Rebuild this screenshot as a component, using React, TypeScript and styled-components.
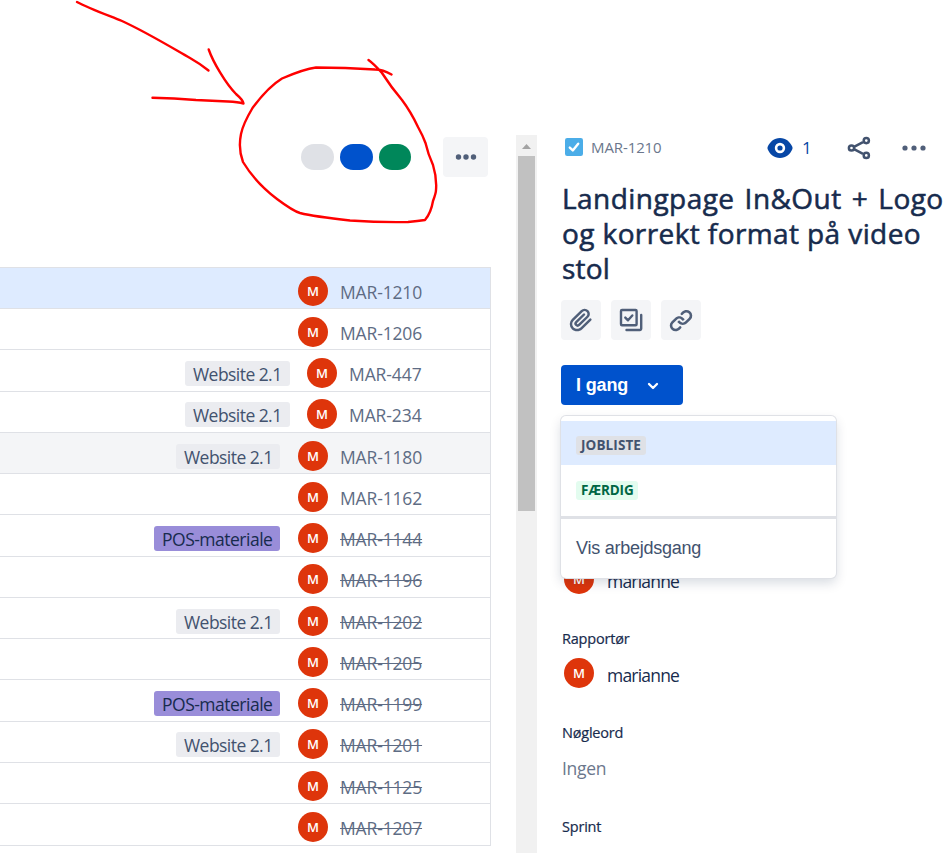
import React from "react";
import styled, { createGlobalStyle, css } from "styled-components";

const GlobalStyle = createGlobalStyle`
  * { box-sizing: border-box; }
  body {
    margin: 0;
    background: #fff;
    color: #172b4d;
    font-family: "Open Sans", "Noto Sans", sans-serif;
  }
`;

const Page = styled.main`
  position: relative;
  display: grid;
  grid-template-columns: 491px 21px 391px;
  column-gap: 25px;
  width: 952px;
  height: 853px;
  overflow: hidden;
`;

const Backlog = styled.section`
  display: flex;
  flex-direction: column;
  padding-top: 137px;
`;

const Toolbar = styled.div`
  display: flex;
  align-items: center;
  justify-content: flex-end;
  gap: 6px;
  height: 40px;
  padding-right: 3px;
  margin-bottom: 90px;
`;

const Pill = styled.span<{ $color: string; $width?: number }>`
  width: ${(p) => p.$width ?? 33}px;
  height: 26px;
  border-radius: 13px;
  background: ${(p) => p.$color};
`;

const MoreButton = styled.button`
  display: flex;
  align-items: center;
  justify-content: center;
  width: 45px;
  height: 40px;
  margin-left: 26px;
  padding: 0;
  border: 0;
  border-radius: 4px;
  background: #f4f5f7;
`;

const IssueList = styled.div`
  border-right: 1px solid #dfe1e6;
  border-bottom: 1px solid #dfe1e6;
`;

const IssueRow = styled.div<{ $tone?: string; $tall: boolean; $raised: boolean }>`
  display: flex;
  align-items: flex-start;
  justify-content: flex-end;
  height: ${(p) => (p.$tall ? 42 : 41)}px;
  padding: ${(p) => (p.$raised ? 7 : 8)}px 68px 0 0;
  border-top: 1px solid #dfe1e6;
  background: ${(p) => p.$tone ?? "#fff"};
`;

const Tag = styled.span<{ $epic: boolean; $wide: boolean }>`
  height: 25px;
  margin: 3px ${(p) => (p.$wide ? 17 : 18)}px 0 0;
  padding: 0 8px;
  border-radius: 3px;
  font-size: 17.5px;
  line-height: 27px;
  white-space: nowrap;
  ${(p) =>
    p.$epic
      ? css`
          width: 126px;
          background: #998dd9;
          color: #172b4d;
          letter-spacing: -0.5px;
        `
      : css`
          width: ${p.$wide ? 105 : 104}px;
          background: #ebecf0;
          color: #42526e;
          letter-spacing: -0.55px;
        `}
`;

const Avatar = styled.span`
  display: flex;
  flex: none;
  align-items: center;
  justify-content: center;
  width: 30px;
  height: 30px;
  border-radius: 50%;
  background: #de350b;
  color: #fff;
  font-size: 13px;
  font-weight: 600;
  line-height: 30px;
`;

const IssueKey = styled.span<{ $done: boolean; $short: boolean }>`
  width: ${(p) => (p.$short ? 73 : 82)}px;
  margin-left: 12px;
  color: #5e6c84;
  font-size: 17.5px;
  line-height: 32px;
  letter-spacing: ${(p) => (p.$short ? -0.1 : -0.15)}px;
  white-space: nowrap;
  text-decoration: ${(p) => (p.$done ? "line-through" : "none")};
`;

const ScrollTrack = styled.div`
  display: flex;
  flex-direction: column;
  align-items: center;
  margin-top: 135px;
  background: #f1f1f1;
`;

const ScrollArrow = styled.svg`
  flex: none;
  width: 21px;
  height: 21px;
`;

const ScrollThumb = styled.div`
  width: 17px;
  height: 355px;
  background: #c1c1c1;
`;

const Detail = styled.section`
  display: flex;
  flex-direction: column;
  margin-left: -1px;
  padding-top: 133px;
`;

const DetailHeader = styled.header`
  display: flex;
  align-items: center;
  height: 30px;
  padding-left: 4px;
`;

const HeaderKey = styled.span`
  width: 176px;
  margin: -2px 0 0 8px;
  color: #6b778c;
  font-size: 15px;
  letter-spacing: -0.1px;
`;

const WatchCount = styled.span`
  width: 45px;
  margin-top: -2px;
  padding-left: 9px;
  color: #0747a6;
  font-size: 17px;
`;

const TypeIcon = styled.svg`
  flex: none;
  margin-top: -2px;
`;

const HeaderIcon = styled.svg<{ $gap?: number }>`
  flex: none;
  margin-left: ${(p) => p.$gap ?? 0}px;
`;

const Title = styled.h1`
  height: 105px;
  margin: 18px 0 14px 1px;
  font-size: 28px;
  font-weight: 400;
  line-height: 35px;
  white-space: nowrap;
  -webkit-text-stroke: 0.55px #172b4d;
`;

const TitleLine = styled.span<{ $tracking: number; $wordGap: number }>`
  display: block;
  letter-spacing: ${(p) => p.$tracking}px;
  word-spacing: ${(p) => p.$wordGap}px;
`;

const Actions = styled.div`
  display: flex;
  gap: 10px;
  height: 40px;
  margin-bottom: 25px;
`;

const ActionButton = styled.button`
  display: flex;
  align-items: center;
  justify-content: center;
  width: 40px;
  height: 40px;
  padding: 0;
  border: 0;
  border-radius: 4px;
  background: #f4f5f7;
  color: #505f79;
`;

const StatusArea = styled.div`
  position: relative;
  height: 40px;
  margin-bottom: 159px;
`;

const StatusButton = styled.button`
  display: flex;
  align-items: center;
  width: 122px;
  height: 40px;
  padding: 0 0 0 15px;
  border: 0;
  border-radius: 4px;
  background: #0052cc;
  color: #fff;
  font: bold 18px/40px "Liberation Sans", Arial, sans-serif;
`;

const StatusLabel = styled.span`
  width: 71px;
  text-align: left;
  letter-spacing: -0.15px;
`;

const StatusMenu = styled.div`
  position: absolute;
  z-index: 1;
  top: 51px;
  left: 0;
  width: 275px;
  height: 162px;
  padding-top: 5px;
  border-radius: 5px;
  background: #fff;
  box-shadow: 0 0 0 1px #dfe1e6, 0 5px 12px rgba(9, 30, 66, 0.16);
`;

const MenuItem = styled.div<{ $active?: boolean }>`
  display: flex;
  align-items: center;
  height: ${(p) => (p.$active ? 44 : 51)}px;
  padding: ${(p) => (p.$active ? "4px 15px 0" : "0 15px 1px")};
  background: ${(p) => (p.$active ? "#deebff" : "transparent")};
`;

const Lozenge = styled.span<{ $done?: boolean }>`
  width: ${(p) => (p.$done ? 62 : 70)}px;
  height: 19px;
  padding-left: 5px;
  border-radius: 3px;
  background: ${(p) => (p.$done ? "#e3fcef" : "#dfe1e6")};
  color: ${(p) => (p.$done ? "#006644" : "#42526e")};
  font-size: 13.5px;
  font-weight: 700;
  line-height: 19px;
  letter-spacing: ${(p) => (p.$done ? -0.15 : 0.1)}px;
  white-space: nowrap;
`;

const MenuFooter = styled.div`
  height: 62px;
  padding: 0 15px;
  border-top: 3px solid #dfe1e6;
  color: #42526e;
  font: 18px/58px "Liberation Sans", Arial, sans-serif;
  letter-spacing: -0.25px;
`;

const Field = styled.div`
  height: 94px;
`;

const PersonRow = styled.div`
  display: flex;
  align-items: center;
  height: 30px;
  padding-left: 3px;
`;

const PersonName = styled.span`
  margin-left: 13px;
  padding-top: 3px;
  font-size: 17.5px;
  line-height: 26px;
  letter-spacing: -0.8px;
`;

const Assignee = styled(PersonRow)`
  margin-bottom: 34px;
`;

const FieldLabel = styled.div`
  height: 30px;
  padding-left: 1px;
  font-size: 14.5px;
  line-height: 22px;
  letter-spacing: -0.2px;
  -webkit-text-stroke: 0.2px #172b4d;
`;

const EmptyValue = styled.div`
  padding-left: 1px;
  color: #6b778c;
  font-size: 17.5px;
  line-height: 33px;
  letter-spacing: -0.3px;
`;

const Annotation = styled.svg`
  position: absolute;
  z-index: 2;
  top: 0;
  left: 0;
  pointer-events: none;
`;

type Issue = { key: string; tag?: string; done?: boolean; tone?: string };

const issues: Issue[] = [
  { key: "MAR-1210", tone: "#deebff" },
  { key: "MAR-1206" },
  { key: "MAR-447", tag: "Website 2.1" },
  { key: "MAR-234", tag: "Website 2.1" },
  { key: "MAR-1180", tag: "Website 2.1", tone: "#f4f5f7" },
  { key: "MAR-1162" },
  { key: "MAR-1144", tag: "POS-materiale", done: true },
  { key: "MAR-1196", done: true },
  { key: "MAR-1202", tag: "Website 2.1", done: true },
  { key: "MAR-1205", done: true },
  { key: "MAR-1199", tag: "POS-materiale", done: true },
  { key: "MAR-1201", tag: "Website 2.1", done: true },
  { key: "MAR-1125", done: true },
  { key: "MAR-1207", done: true },
];

const tallRows = [2, 6, 10, 13];

function Dots({ gap, r, width }: { gap: number; r: number; width: number }) {
  const c = width / 2;
  return (
    <svg width={width} height="8" fill="#505f79">
      <circle cx={c - gap} cy="4" r={r} />
      <circle cx={c} cy="4" r={r} />
      <circle cx={c + gap} cy="4" r={r} />
    </svg>
  );
}

function AttachIcon() {
  return (
    <svg width="30" height="30" viewBox="0 0 24 24" fill="currentColor">
      <path d="M11.643 17.965c-1.53 1.495-4.016 1.496-5.542.004a3.773 3.773 0 01.002-5.412l7.147-6.985a2.316 2.316 0 013.233-.003c.893.873.895 2.282.004 3.153l-6.703 6.55a.653.653 0 01-.914-.008.62.62 0 010-.902l6.229-6.087a.941.941 0 000-1.353.995.995 0 00-1.384 0l-6.23 6.087a2.502 2.502 0 000 3.607 2.643 2.643 0 003.683.009l6.703-6.55a4.074 4.074 0 00-.003-5.859 4.306 4.306 0 00-6.002.003L4.72 11.204a5.635 5.635 0 00-.001 8.117c2.292 2.239 6.015 2.239 8.308-.002l7.148-6.984a.941.941 0 00.001-1.353.995.995 0 00-1.385-.002l-7.148 6.985z" />
    </svg>
  );
}

function SubtaskIcon() {
  return (
    <svg width="40" height="40" fill="none" stroke="currentColor" strokeWidth="2.4" strokeLinecap="round" strokeLinejoin="round">
      <rect x="10" y="10" width="15.6" height="15.2" rx="1" />
      <path d="M14.3 17.6l2.7 2.7 4.3-4.8" />
      <path d="M30.2 15v13.6a1.4 1.4 0 01-1.4 1.4H15.5" />
    </svg>
  );
}

function LinkIcon() {
  return (
    <svg width="30" height="30" viewBox="0 0 24 24" fill="currentColor">
      <path d="M12.856 5.457l-.937.92a1.002 1.002 0 000 1.437 1.047 1.047 0 001.463 0l.984-.966c.967-.95 2.542-1.135 3.602-.288a2.54 2.54 0 01.203 3.81l-2.903 2.852a2.646 2.646 0 01-3.696 0l-1.11-1.09L9 13.57l1.108 1.089c1.822 1.788 4.802 1.788 6.622 0l2.905-2.852a4.558 4.558 0 00-.357-6.82c-1.893-1.517-4.695-1.226-6.422.47" />
      <path d="M11.144 19.543l.937-.92a1.002 1.002 0 000-1.437 1.047 1.047 0 00-1.462 0l-.985.966c-.966.95-2.542 1.135-3.602.288a2.54 2.54 0 01-.203-3.81l2.903-2.852a2.646 2.646 0 013.697 0l1.11 1.09L15 11.43l-1.108-1.089c-1.822-1.788-4.802-1.788-6.622 0l-2.905 2.852a4.558 4.558 0 00.357 6.82c1.893 1.517 4.695 1.226 6.422-.47" />
    </svg>
  );
}

export default function App() {
  return (
    <>
      <GlobalStyle />
      <Page>
        <Backlog>
          <Toolbar>
            <Pill $color="#dfe1e6" />
            <Pill $color="#0052cc" />
            <Pill $color="#00875a" $width={32} />
            <MoreButton aria-label="Mere">
              <Dots gap={7.5} r={2.7} width={30} />
            </MoreButton>
          </Toolbar>
          <IssueList>
            {issues.map((issue, i) => {
              const short = issue.key.length < 8;
              return (
                <IssueRow key={issue.key} $tone={issue.tone} $tall={tallRows.includes(i)} $raised={i % 4 === 3}>
                  {issue.tag && (
                    <Tag $epic={issue.tag === "POS-materiale"} $wide={short}>
                      {issue.tag}
                    </Tag>
                  )}
                  <Avatar>M</Avatar>
                  <IssueKey $done={!!issue.done} $short={short}>
                    {issue.key}
                  </IssueKey>
                </IssueRow>
              );
            })}
          </IssueList>
        </Backlog>

        <ScrollTrack>
          <ScrollArrow>
            <path d="M6 14h9l-4.5-5z" fill="#a3a3a3" />
          </ScrollArrow>
          <ScrollThumb />
        </ScrollTrack>

        <Detail>
          <DetailHeader>
            <TypeIcon width="18" height="18">
              <rect width="18" height="18" rx="2.2" fill="#4bade8" />
              <path d="M4.8 9.6l3 2.8 5.4-6.6" fill="none" stroke="#fff" strokeWidth="2.4" strokeLinecap="round" strokeLinejoin="round" />
            </TypeIcon>
            <HeaderKey>MAR-1210</HeaderKey>
            <HeaderIcon width="26" height="20">
              <path d="M13 0C7 0 2.8 4 .7 8.8a2.8 2.8 0 000 2.4C2.8 16 7 20 13 20s10.2-4 12.3-8.8a2.8 2.8 0 000-2.4C23.2 4 19 0 13 0z" fill="#0747a6" />
              <circle cx="13" cy="10" r="3.9" fill="none" stroke="#fff" strokeWidth="2.6" />
            </HeaderIcon>
            <WatchCount>1</WatchCount>
            <HeaderIcon width="24" height="24" $gap={9} fill="none" stroke="#42526e" strokeWidth="2.5">
              <path d="M7 10.8l9-4.7M7 13.2l9 4.7" />
              <circle cx="4.5" cy="12" r="2.6" />
              <circle cx="19.3" cy="4.6" r="2.6" />
              <circle cx="19.3" cy="19.4" r="2.6" />
            </HeaderIcon>
            <HeaderIcon width="30" height="8" $gap={28} fill="#505f79">
              <circle cx="6" cy="4" r="2.6" />
              <circle cx="15" cy="4" r="2.6" />
              <circle cx="24" cy="4" r="2.6" />
            </HeaderIcon>
          </DetailHeader>

          <Title>
            <TitleLine $tracking={0.45} $wordGap={2.4}>Landingpage In&amp;Out + Logo</TitleLine>
            <TitleLine $tracking={0.4} $wordGap={0}>og korrekt format på video</TitleLine>
            <TitleLine $tracking={0.2} $wordGap={0}>stol</TitleLine>
          </Title>

          <Actions>
            <ActionButton aria-label="Vedhæft"><AttachIcon /></ActionButton>
            <ActionButton aria-label="Underopgave"><SubtaskIcon /></ActionButton>
            <ActionButton aria-label="Link"><LinkIcon /></ActionButton>
          </Actions>

          <StatusArea>
            <StatusButton>
              <StatusLabel>I gang</StatusLabel>
              <svg width="12" height="10" fill="none" stroke="#fff" strokeWidth="2.3" strokeLinecap="round" strokeLinejoin="round">
                <path d="M2 4l4 4 4-4" />
              </svg>
            </StatusButton>
            <StatusMenu>
              <MenuItem $active>
                <Lozenge>JOBLISTE</Lozenge>
              </MenuItem>
              <MenuItem>
                <Lozenge $done>FÆRDIG</Lozenge>
              </MenuItem>
              <MenuFooter>Vis arbejdsgang</MenuFooter>
            </StatusMenu>
          </StatusArea>

          <Assignee>
            <Avatar>M</Avatar>
            <PersonName>marianne</PersonName>
          </Assignee>

          <Field>
            <FieldLabel>Rapportør</FieldLabel>
            <PersonRow>
              <Avatar>M</Avatar>
              <PersonName>marianne</PersonName>
            </PersonRow>
          </Field>
          <Field>
            <FieldLabel>Nøgleord</FieldLabel>
            <EmptyValue>Ingen</EmptyValue>
          </Field>
          <Field>
            <FieldLabel>Sprint</FieldLabel>
          </Field>
        </Detail>

        <Annotation width="952" height="240" fill="none" stroke="#f00" strokeWidth="2.4" strokeLinecap="round" strokeLinejoin="round">
          <path d="M77 2C90 9 110 16 122 21C148 33 174 49 190 58C197 62 203 66 208.5 70.5" />
          <path d="M208.7 49.5C213 62 226 84 236 94Q243 100 243.5 103.5Q238 102 228 101.5L196 100Q174 98 152.5 97.7" />
          <path d="M391.5 74.5Q383 69.5 375 69.5Q345 67.5 316 67.5Q304 69 282 78.5Q268 87 252.5 108Q243 124 241 134Q238 149 243 162Q255 182 277 199Q293 211 300 213Q314 216.5 350 220.5Q380 222.5 408 222Q418 221 425 220Q431 213 433 201Q436 193 436 190Q437 178 433 165Q428 154 425.5 143Q423 136 418 127Q411 112 402 100Q391 87 382 73Q374 64 368.5 60" />
        </Annotation>
      </Page>
    </>
  );
}
